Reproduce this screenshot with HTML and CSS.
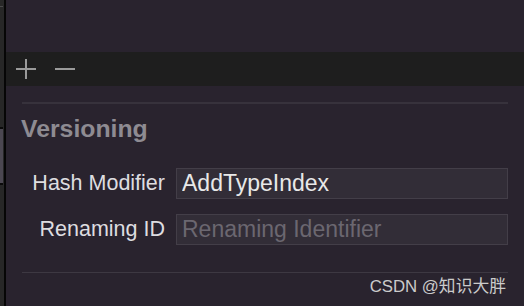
FILE: index.html
```html
<!DOCTYPE HTML>
<html>
<head>
<meta http-equiv="Content-Type" content="text/html; charset=utf-8">
<title>Versioning</title>
<link rel="stylesheet" href="styles.css">
</head>
<body>
	<div class="shell">
		<div class="rail">
			<div class="rail-tick"></div>
			<div class="rail-tab"></div>
		</div>
		<div class="panel">
			<div class="list-area"></div>
			<div class="toolbar">
				<svg class="tool" width="22" height="22" viewBox="0 0 22 22"><path d="M11 1v20M1 11h20" stroke="#9a9a9a" stroke-width="2" fill="none"/></svg>
				<svg class="tool" width="22" height="22" viewBox="0 0 22 22"><path d="M1 11h20" stroke="#9a9a9a" stroke-width="2" fill="none"/></svg>
			</div>
			<div class="inspector">
				<div class="sep"></div>
				<h2 class="section-title">Versioning</h2>
				<div class="form">
					<label class="label">Hash Modifier</label>
					<input class="field" type="text" value="AddTypeIndex" />
					<label class="label">Renaming ID</label>
					<input class="field" type="text" placeholder="Renaming Identifier" />
				</div>
				<div class="sep sep-bottom"></div>
			</div>
		</div>
	</div>
	<div class="mark">CSDN @知识大胖</div>
</body>
</html>
```

FILE: styles.css
```css
body { margin:0; width:524px; height:306px; overflow:hidden; background:#29232e; font-family:"Liberation Sans", "Noto Sans CJK SC", sans-serif; position:relative; }
.shell { display:flex; height:306px; }
.rail { width:4px; background:#272727; border-right:2px solid #060606; display:flex; flex-direction:column; }
.rail-tick { height:1px; margin-top:6px; width:3px; background:#4a4a4a; }
.rail-tab { height:54px; margin-top:120px; width:3px; background:#4b4751; border-top:2px solid #0a0a0a; border-bottom:2px solid #0a0a0a; }
.panel { flex:1; display:flex; flex-direction:column; }
.list-area { height:52px; }
.toolbar { height:34px; background:#1e1e1e; display:flex; align-items:center; padding-left:9px; gap:17px; }
.inspector { padding:16px 16px 0; }
.sep { height:2px; background:#37323c; }
.section-title { margin:11px 0 0 -1px; font-size:24.8px; line-height:28px; font-weight:bold; color:#8e8b92; }
.form { display:grid; grid-template-columns:143px 1fr; column-gap:11px; row-gap:15px; align-items:center; margin-top:25px; }
.label { text-align:right; font-size:21.5px; color:#dedde0; }
.field { height:31px; box-sizing:border-box; margin:0; padding:0 5px; background:#322d37; border:1px solid #433e48; color:#e8e8e8; font-family:"Liberation Sans", sans-serif; font-size:23px; outline:none; }
.field::placeholder { color:#6b6770; }
.sep-bottom { margin-top:27px; height:1px; background:#3d3842; }
.mark { position:absolute; right:18px; bottom:9px; font-size:16.8px; color:#cbcbcb; }
```
